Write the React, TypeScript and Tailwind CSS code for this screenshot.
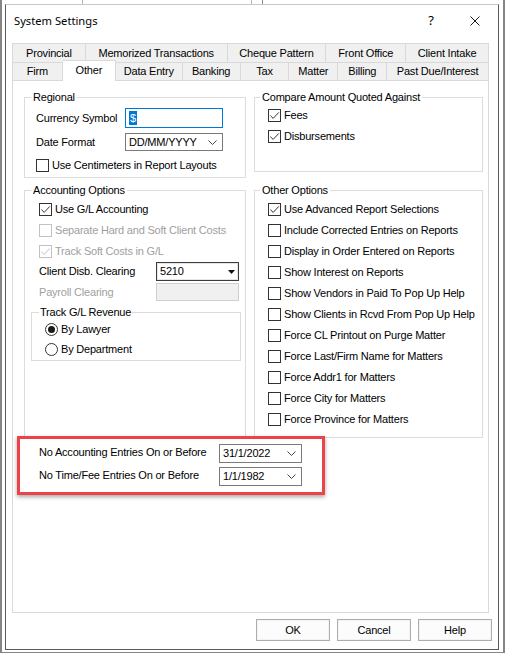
import React from "react";

const ui = "font-['Liberation_Sans',Arial,sans-serif]";

function Check({ checked = false, disabled = false }: { checked?: boolean; disabled?: boolean }) {
  const c = disabled ? "#c2c2c2" : "#333333";
  return (
    <span
      className={`w-[13px] h-[13px] shrink-0 border bg-white flex items-center justify-center ${
        disabled ? "border-[#c2c2c2]" : "border-[#333333]"
      }`}
    >
      {checked && (
        <svg width="11" height="11" viewBox="0 0 11 11">
          <path d="M1.3 5.6 L4.2 8.4 L9.8 2.4" fill="none" stroke={c} strokeWidth="1" />
        </svg>
      )}
    </span>
  );
}

function Radio({ checked = false }: { checked?: boolean }) {
  return (
    <span className="w-[13px] h-[13px] shrink-0 rounded-full border border-[#333333] bg-white flex items-center justify-center">
      {checked && <span className="w-[7px] h-[7px] rounded-full bg-[#1a1a1a]" />}
    </span>
  );
}

function CheckRow({
  label,
  checked,
  disabled,
}: {
  label: string;
  checked?: boolean;
  disabled?: boolean;
}) {
  return (
    <div className="h-[21px] flex items-center">
      <Check checked={checked} disabled={disabled} />
      <span className={`ml-[3px] whitespace-nowrap ${disabled ? "text-[#a0a0a0]" : "text-black"}`}>{label}</span>
    </div>
  );
}

function Chevron() {
  return (
    <svg width="9" height="5" viewBox="0 0 9 5">
      <path d="M0.5 0.5 L4.5 4.5 L8.5 0.5" fill="none" stroke="#444" strokeWidth="1" />
    </svg>
  );
}

function DateBox({ value }: { value: string }) {
  return (
    <div className="w-[83px] h-[19px] border border-[#7a7a7a] bg-white flex items-center pl-[3px] pr-[5px]">
      <span className="flex-1">{value}</span>
      <Chevron />
    </div>
  );
}

const topTabs = [
  { label: "Provincial", w: "w-[73px]" },
  { label: "Memorized Transactions", w: "w-[142px]" },
  { label: "Cheque Pattern", w: "w-[99px]" },
  { label: "Front Office", w: "w-[80px]" },
  { label: "Client Intake", w: "w-[83px]" },
];

const frontTabs = [
  { label: "Firm", w: "w-[50px]" },
  { label: "Other", w: "w-[53px]", active: true },
  { label: "Data Entry", w: "w-[67px]" },
  { label: "Banking", w: "w-[58px]" },
  { label: "Tax", w: "w-[49px]" },
  { label: "Matter", w: "w-[49px]" },
  { label: "Billing", w: "w-[49px]" },
  { label: "Past Due/Interest", w: "w-[102px]" },
];

const otherOptions: { label: string; checked?: boolean }[] = [
  { label: "Use Advanced Report Selections", checked: true },
  { label: "Include Corrected Entries on Reports" },
  { label: "Display in Order Entered on Reports" },
  { label: "Show Interest on Reports" },
  { label: "Show Vendors in Paid To Pop Up Help" },
  { label: "Show Clients in Rcvd From Pop Up Help" },
  { label: "Force CL Printout on Purge Matter" },
  { label: "Force Last/Firm Name for Matters" },
  { label: "Force Addr1 for Matters" },
  { label: "Force City for Matters" },
  { label: "Force Province for Matters" },
];

export default function App() {
  return (
    <div
      className={`w-[505px] h-[653px] bg-[#858585] overflow-hidden pl-[2px] ${ui} text-[11px] tracking-[-0.2px] text-black`}
    >
      <div className="w-[501px] h-[652px] bg-white flex flex-col">
        {/* strip of the window behind */}
        <div className="h-[4px] flex">
          <div className="w-[80px]" />
          <div className="w-px bg-[#b4b4b4]" />
          <div className="w-[168px]" />
          <div className="w-px bg-[#b4b4b4]" />
          <div className="w-[10px]" />
          <div className="w-px bg-[#8a8a8a]" />
        </div>

        <div className="ml-[3px] w-[494px] h-[646px] border-x border-b border-[#5a5a5a] border-t border-t-[#c8c8c8] flex flex-col">
          {/* title bar */}
          <div className="h-[31px] flex items-center pl-[8px] pr-[18px] tracking-normal">
            <span className="font-['Noto_Sans',sans-serif] text-[11.2px] leading-none">System Settings</span>
            <span className="ml-auto font-['Noto_Sans',sans-serif] text-[13px] leading-none">?</span>
            <span className="ml-[36px] flex items-center">
              <svg width="10" height="10" viewBox="0 0 10 10">
                <path d="M0.5 0.5 L9.5 9.5 M9.5 0.5 L0.5 9.5" stroke="#1a1a1a" strokeWidth="1" />
              </svg>
            </span>
          </div>

          {/* tab control */}
          <div className="mt-[7px] ml-[6px] w-[477px] flex flex-col">
            <div className="flex h-[19px] border-l border-[#d9d9d9]">
              {topTabs.map((t) => (
                <div
                  key={t.label}
                  className={`${t.w} h-full border-t border-r border-[#d9d9d9] bg-[#f0f0f0] flex items-center justify-center whitespace-nowrap`}
                >
                  {t.label}
                </div>
              ))}
            </div>
            <div className="flex h-[18px] items-end border-l border-[#d9d9d9]">
              {frontTabs.map((t) =>
                t.active ? (
                  <div
                    key={t.label}
                    className={`${t.w} h-[21px] -mb-px relative z-10 bg-white border-t border-r border-[#d9d9d9] flex items-center justify-center pb-[2px]`}
                  >
                    {t.label}
                  </div>
                ) : (
                  <div
                    key={t.label}
                    className={`${t.w} h-full border-t border-r border-[#d9d9d9] bg-[#f0f0f0] flex items-center justify-center whitespace-nowrap`}
                  >
                    {t.label}
                  </div>
                )
              )}
            </div>

            {/* tab page */}
            <div className="h-[533px] border border-[#d9d9d9] bg-white pt-[10px] pl-[11px] flex flex-col">
              <div className="flex gap-[8px] items-start">
                <fieldset className="w-[222px] h-[87px] border border-[#dcdcdc]">
                  <legend className="ml-[6px] px-[2px] leading-[13px]">Regional</legend>
                  <div className="pl-[11px] flex flex-col">
                    <div className="mt-[4px] h-[20px] flex items-center">
                      <span className="w-[89px]">Currency Symbol</span>
                      <div className="w-[98px] h-[20px] border border-[#0078d7] flex items-center pl-[3px]">
                        <span className="bg-[#0078d7] text-white leading-[14px] px-px">$</span>
                      </div>
                    </div>
                    <div className="mt-[5px] h-[18px] flex items-center">
                      <span className="w-[89px]">Date Format</span>
                      <div className="w-[98px] h-[18px] border border-[#7a7a7a] flex items-center pl-[3px] pr-[5px]">
                        <span className="flex-1">DD/MM/YYYY</span>
                        <Chevron />
                      </div>
                    </div>
                    <div className="mt-[8px] h-[13px] flex items-center">
                      <Check />
                      <span className="ml-[3px] whitespace-nowrap">Use Centimeters in Report Layouts</span>
                    </div>
                  </div>
                </fieldset>

                <fieldset className="w-[229px] h-[81px] border border-[#dcdcdc]">
                  <legend className="ml-[5px] px-[2px] leading-[13px]">Compare Amount Quoted Against</legend>
                  <div className="pl-[13px] flex flex-col">
                    <div className="mt-[5px] h-[13px] flex items-center">
                      <Check checked />
                      <span className="ml-[3px]">Fees</span>
                    </div>
                    <div className="mt-[8px] h-[13px] flex items-center">
                      <Check checked />
                      <span className="ml-[3px]">Disbursements</span>
                    </div>
                  </div>
                </fieldset>
              </div>

              <div className="mt-[6px] flex gap-[8px] items-start">
                <fieldset className="w-[222px] h-[254px] border border-[#dcdcdc]">
                  <legend className="ml-[6px] px-[2px] leading-[13px]">Accounting Options</legend>
                  <div className="flex flex-col">
                    <div className="pl-[14px] mt-[2px] flex flex-col">
                      <CheckRow label="Use G/L Accounting" checked />
                      <CheckRow label="Separate Hard and Soft Client Costs" disabled />
                      <CheckRow label="Track Soft Costs in G/L" checked disabled />
                      <div className="h-[19px] flex items-start">
                        <span className="w-[117px] pt-[1px]">Client Disb. Clearing</span>
                        <div className="w-[83px] h-[19px] border border-[#3c3c3c] shadow-[inset_0_0_0_1px_#e6e6e6] bg-white flex items-center pl-[3px] pr-[3px]">
                          <span className="flex-1">5210</span>
                          <svg width="7" height="4" viewBox="0 0 7 4">
                            <path d="M0 0 L7 0 L3.5 4 Z" fill="#111" />
                          </svg>
                        </div>
                      </div>
                      <div className="mt-[2px] h-[18px] flex items-start">
                        <span className="w-[117px] pt-[1px] text-[#a0a0a0]">Payroll Clearing</span>
                        <div className="w-[83px] h-[18px] border border-[#cfcfcf] bg-[#f0f0f0]" />
                      </div>
                    </div>
                    <fieldset className="mt-[5px] ml-[6px] w-[210px] h-[55px] border border-[#dcdcdc]">
                      <legend className="ml-[7px] px-px leading-[13px]">Track G/L Revenue</legend>
                      <div className="pl-[13px] flex flex-col">
                        <div className="h-[20px] flex items-center">
                          <Radio checked />
                          <span className="ml-[3px]">By Lawyer</span>
                        </div>
                        <div className="h-[20px] flex items-center">
                          <Radio />
                          <span className="ml-[3px]">By Department</span>
                        </div>
                      </div>
                    </fieldset>
                  </div>
                </fieldset>

                <fieldset className="w-[229px] h-[254px] border border-[#dcdcdc]">
                  <legend className="ml-[5px] px-[2px] leading-[13px]">Other Options</legend>
                  <div className="pl-[13px] mt-[2px] flex flex-col">
                    {otherOptions.map((o) => (
                      <CheckRow key={o.label} label={o.label} checked={o.checked} />
                    ))}
                  </div>
                </fieldset>
              </div>

              {/* highlighted posting lock dates */}
              <div className="-mt-[2px] -ml-[7px] w-[308px] h-[59px] border-[3px] border-[#ec4348] bg-white relative z-10 shadow-[0_2px_4px_rgba(0,0,0,0.35)] pt-[5px] pl-[19px] flex flex-col gap-[4px]">
                <div className="h-[19px] flex items-center">
                  <span className="w-[180px] -mt-[2px]">No Accounting Entries On or Before</span>
                  <DateBox value="31/1/2022" />
                </div>
                <div className="h-[19px] flex items-center">
                  <span className="w-[180px] -mt-[2px]">No Time/Fee Entries On or Before</span>
                  <DateBox value="1/1/1982" />
                </div>
              </div>
            </div>
          </div>

          {/* dialog buttons */}
          <div className="mt-[6px] flex justify-end gap-[7px] pr-[6px]">
            {["OK", "Cancel", "Help"].map((b) => (
              <div
                key={b}
                className="w-[74px] h-[22px] border border-[#adadad] bg-[#fcfcfc] shadow-[inset_0_0_0_1px_#f3f3f3] flex items-center justify-center"
              >
                {b}
              </div>
            ))}
          </div>
        </div>
      </div>
    </div>
  );
}
